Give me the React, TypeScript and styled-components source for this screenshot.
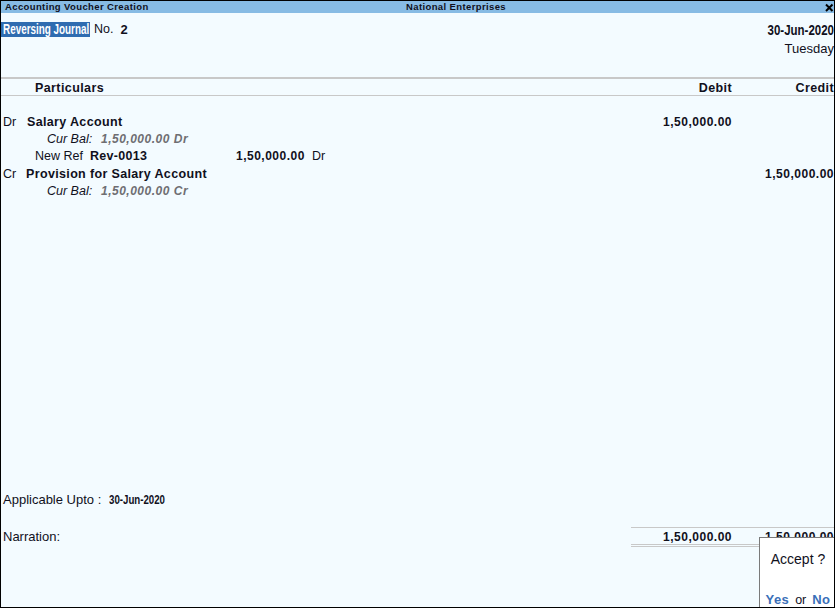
import * as React from 'react';
import styled, { createGlobalStyle } from 'styled-components';

const GlobalStyle = createGlobalStyle`
  html, body {
    margin: 0;
    padding: 0;
    background: #f3fbff;
  }
  * {
    box-sizing: border-box;
  }
`;

const Screen = styled.div`
  position: relative;
  width: 835px;
  height: 608px;
  display: flex;
  flex-direction: column;
  overflow: hidden;
  background: #f3fbff;
  border: 1px solid #000;
  font-family: 'Liberation Sans', Arial, sans-serif;
  font-size: 12.5px;
  color: #10101c;
`;
const TitleBar = styled.div`
  height: 12px;
  flex: none;
  display: grid;
  grid-template-columns: 401px 1fr 20px;
  align-items: center;
  padding: 0 0 0 4px;
  background: #87bbe4;
  font-size: 9.5px;
  font-weight: bold;
  letter-spacing: 0.38px;
  line-height: 12px;
`;
const TitleClose = styled.div`
  display: flex;
  justify-content: flex-end;
  align-items: center;
  color: #000;
`;
const VoucherHead = styled.div`
  height: 64px;
  flex: none;
  display: flex;
  justify-content: space-between;
  padding-top: 9px;
`;
const VoucherLeft = styled.div`
  display: flex;
  align-items: flex-start;
  height: 15px;
  line-height: 15px;
`;
const TypeBadge = styled.span`
  width: 89px;
  height: 15px;
  padding-left: 2px;
  background: #2f6cb0;
  color: #fff;
  white-space: nowrap;
`;
// no condensed face is installed, so the narrow bold text is squeezed
const SqueezedText = styled.span<{ $size: number; $scale: number; $origin?: string }>`
  display: inline-block;
  font-weight: bold;
  font-size: ${(p) => p.$size}px;
  white-space: nowrap;
  transform: scaleX(${(p) => p.$scale});
  transform-origin: ${(p) => p.$origin || 'left'} center;
`;
const NoLabel = styled.span`
  margin-left: 4px;
`;
const NoValue = styled.span`
  margin-left: 7px;
  font-size: 13px;
  font-weight: bold;
`;
const VoucherRight = styled.div`
  display: flex;
  flex-direction: column;
  align-items: flex-end;
  gap: 3px;
  padding-top: 1px;
  line-height: 15px;
`;
const DayName = styled.span`
  font-size: 13px;
`;
const HeaderRow = styled.div`
  height: 19px;
  flex: none;
  padding: 1px 0 0 34px;
  display: grid;
  grid-template-columns: 1fr 100px 102px;
  align-items: center;
  border-top: 2px solid #c8c8c8;
  border-bottom: 1px solid #c8c8c8;
  font-size: 12.5px;
  font-weight: bold;
  letter-spacing: 0.4px;
`;
const RightCell = styled.div`
  text-align: right;
`;
const Entries = styled.div`
  flex: 1;
  padding-top: 17.7px;
`;
const EntryRow = styled.div<{ $indent?: number }>`
  height: 17.3px;
  display: grid;
  grid-template-columns: 1fr 100px 102px;
  align-items: center;
  padding-left: ${(p) => p.$indent || 2}px;
  line-height: 17px;
  white-space: nowrap;
`;
const LeftCell = styled.div`
  display: flex;
`;
const DrCr = styled.span<{ $width: number }>`
  width: ${(p) => p.$width}px;
`;
const LedgerName = styled.span`
  font-weight: bold;
  font-size: 12.5px;
  letter-spacing: 0.35px;
`;
const Amount = styled.span`
  font-weight: bold;
  font-size: 12px;
  letter-spacing: 0.5px;
`;
const CurBalLabel = styled.span`
  font-style: italic;
  width: 54px;
`;
const CurBalValue = styled.span`
  font-style: italic;
  font-weight: bold;
  font-size: 12px;
  color: #6e6e72;
  letter-spacing: 0.5px;
`;
const RefLabel = styled.span`
  width: 55px;
`;
const RefName = styled.span`
  width: 146px;
  font-weight: bold;
  letter-spacing: 0.3px;
`;
const RefDr = styled.span`
  margin-left: 7px;
`;
const UptoRow = styled.div`
  flex: none;
  display: flex;
  align-items: center;
  height: 15px;
  padding-left: 2px;
  font-size: 13px;
`;
const UptoValue = styled.span`
  margin-left: 8px;
  width: 56px;
`;
const NarrationRow = styled.div`
  flex: none;
  height: 80px;
  margin-top: 20px;
  display: flex;
  justify-content: space-between;
  align-items: flex-start;
`;
const NarrationLabel = styled.span`
  padding: 2px 0 0 2px;
  font-size: 13px;
`;
const Totals = styled.div`
  width: 203px;
  height: 20px;
  padding-top: 1px;
  display: grid;
  grid-template-columns: 101px 102px;
  align-items: center;
  border-top: 1px solid #c8c8c8;
  border-bottom: 3px double #c8c8c8;
`;
const Prompt = styled.div`
  position: absolute;
  right: 0;
  bottom: 0;
  width: 75px;
  height: 70px;
  padding: 13px 0 0 2px;
  display: flex;
  flex-direction: column;
  align-items: center;
  background: #fff;
  border-top: 1px solid #7a7a7a;
  border-left: 1px solid #7a7a7a;
`;
const PromptTitle = styled.div`
  font-size: 14px;
  line-height: 16px;
`;
const PromptActions = styled.div`
  margin-top: 26px;
  display: flex;
  gap: 6px;
  align-items: baseline;
  line-height: 14px;
`;
const PromptKey = styled.span`
  color: #3a6fb8;
  font-weight: bold;
  font-size: 13px;
  letter-spacing: 0.4px;
`;

const App = () => {
  return (
    <Screen>
      <GlobalStyle />
      <TitleBar>
        <div>Accounting Voucher Creation</div>
        <div>National Enterprises</div>
        <TitleClose>
          <svg width="9" height="9" viewBox="0 0 9 9">
            <path d="M1 1.5 L7.5 8 M7.5 1.5 L1 8" stroke="#000" strokeWidth="2" fill="none" />
          </svg>
        </TitleClose>
      </TitleBar>
      <VoucherHead>
        <VoucherLeft>
          <TypeBadge>
            <SqueezedText $size={14} $scale={0.706}>
              Reversing Journal
            </SqueezedText>
          </TypeBadge>
          <NoLabel>No.</NoLabel>
          <NoValue>2</NoValue>
        </VoucherLeft>
        <VoucherRight>
          <SqueezedText $size={14} $scale={0.82} $origin="right">
            30-Jun-2020
          </SqueezedText>
          <DayName>Tuesday</DayName>
        </VoucherRight>
      </VoucherHead>
      <HeaderRow>
        <div>Particulars</div>
        <RightCell>Debit</RightCell>
        <RightCell>Credit</RightCell>
      </HeaderRow>
      <Entries>
        <EntryRow>
          <LeftCell>
            <DrCr $width={24}>Dr</DrCr>
            <LedgerName>Salary Account</LedgerName>
          </LeftCell>
          <RightCell>
            <Amount>1,50,000.00</Amount>
          </RightCell>
          <div />
        </EntryRow>
        <EntryRow $indent={46}>
          <LeftCell>
            <CurBalLabel>Cur Bal:</CurBalLabel>
            <CurBalValue>1,50,000.00 Dr</CurBalValue>
          </LeftCell>
        </EntryRow>
        <EntryRow $indent={34}>
          <LeftCell>
            <RefLabel>New Ref</RefLabel>
            <RefName>Rev-0013</RefName>
            <Amount>1,50,000.00</Amount>
            <RefDr>Dr</RefDr>
          </LeftCell>
        </EntryRow>
        <EntryRow>
          <LeftCell>
            <DrCr $width={23}>Cr</DrCr>
            <LedgerName>Provision for Salary Account</LedgerName>
          </LeftCell>
          <div />
          <RightCell>
            <Amount>1,50,000.00</Amount>
          </RightCell>
        </EntryRow>
        <EntryRow $indent={46}>
          <LeftCell>
            <CurBalLabel>Cur Bal:</CurBalLabel>
            <CurBalValue>1,50,000.00 Cr</CurBalValue>
          </LeftCell>
        </EntryRow>
      </Entries>
      <UptoRow>
        Applicable Upto :
        <UptoValue>
          <SqueezedText $size={13} $scale={0.745}>
            30-Jun-2020
          </SqueezedText>
        </UptoValue>
      </UptoRow>
      <NarrationRow>
        <NarrationLabel>Narration:</NarrationLabel>
        <Totals>
          <RightCell>
            <Amount>1,50,000.00</Amount>
          </RightCell>
          <RightCell>
            <Amount>1,50,000.00</Amount>
          </RightCell>
        </Totals>
      </NarrationRow>
      <Prompt>
        <PromptTitle>Accept ?</PromptTitle>
        <PromptActions>
          <PromptKey>Yes</PromptKey>
          <span>or</span>
          <PromptKey>No</PromptKey>
        </PromptActions>
      </Prompt>
    </Screen>
  );
};

export default App;
